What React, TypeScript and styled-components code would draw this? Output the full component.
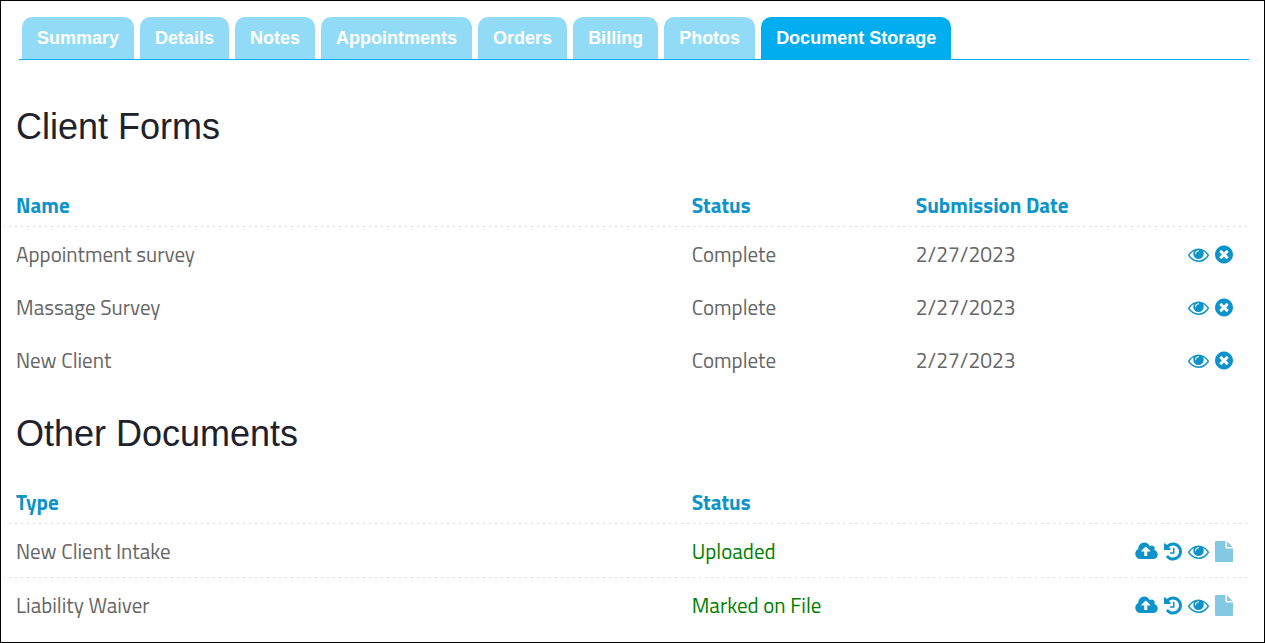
import React from "react";
import styled, { createGlobalStyle } from "styled-components";

const BLUE = "#0c94ca";

const GlobalStyle = createGlobalStyle`
  *, *::before, *::after { box-sizing: border-box; }
  body { margin: 0; background: #fff; font-family: "Liberation Sans", Arial, sans-serif; }
`;

const Page = styled.div`
  min-height: 100vh;
  border: 1px solid #000;
  padding: 16px 15px 0 3px;
`;

const TabBar = styled.nav`
  display: flex;
  gap: 6px;
  margin-left: 15px;
  padding-left: 3px;
  border-bottom: 1px solid #00aeef;
`;

const Tab = styled.a<{ $active?: boolean }>`
  padding: 0 15px;
  border-radius: 10px 10px 0 0;
  background: ${(p) => (p.$active ? "#00aeef" : "#92dbf6")};
  color: #fff;
  font-size: 18px;
  font-weight: 700;
  line-height: 42px;
  text-decoration: none;
  white-space: nowrap;
`;

const Section = styled.section<{ $first?: boolean }>`
  padding-top: ${(p) => (p.$first ? "45px" : "26px")};
`;

const Title = styled.h2<{ $first?: boolean }>`
  margin: 0 0 ${(p) => (p.$first ? "41px" : "31px")};
  padding-left: 12px;
  color: #20212b;
  font-size: 36px;
  font-weight: 400;
  line-height: 44px;
`;

const Table = styled.table`
  width: 100%;
  table-layout: fixed;
  border-collapse: separate;
  border-spacing: 0;
  font-family: "Titillium Web", Roboto, sans-serif;
  font-size: 21px;
  line-height: 24px;
`;

const Col = styled.col<{ $width?: string }>`
  width: ${(p) => p.$width ?? "auto"};
`;

/* A lined row draws short dashes, 2px on and 4px off, under its cells. */
const Row = styled.tr<{ $line?: boolean }>`
  ${(p) =>
    p.$line &&
    `
    background: linear-gradient(90deg, #dadada 1px, transparent 1px 5px, #dadada 5px) 0 100% / 6px 1px repeat-x;
    & > * { border-bottom: 1px solid transparent; }
  `}
`;

const HeadCell = styled.th`
  padding: 3px 12px 9px;
  color: ${BLUE};
  font-weight: 700;
  text-align: left;
`;

const EmptyCell = styled.td`
  padding: 0;
`;

const Cell = styled.td<{ $done?: boolean }>`
  padding: 15px 12px 14px;
  color: ${(p) => (p.$done ? "#008000" : "#666")};
  font-weight: 400;
`;

const Actions = styled.div`
  display: flex;
  justify-content: flex-end;
  align-items: center;
  gap: 6px;
  height: 24px;
  padding-right: 4px;
`;

const IconButton = styled.button<{ $faded?: boolean }>`
  display: flex;
  padding: 0;
  border: 0;
  background: none;
  color: ${BLUE};
  opacity: ${(p) => (p.$faded ? 0.5 : 1)};
  cursor: pointer;
`;

const icons = {
  eye: {
    label: "View",
    box: "0 0 1792 1792",
    width: 21,
    d: "M1664 960q-152-236-381-353 61 104 61 225 0 185-131.5 316.5t-316.5 131.5-316.5-131.5-131.5-316.5q0-121 61-225-229 117-381 353 133 205 333.5 326.5t434.5 121.5 434.5-121.5 333.5-326.5zm-720-384q0-20-14-34t-34-14q-125 0-214.5 89.5t-89.5 214.5q0 20 14 34t34 14 34-14 14-34q0-86 61-147t147-61q20 0 34-14t14-34zm848 384q0 34-20 69-140 230-376.5 368.5t-499.5 138.5-499.5-139-376.5-368q-20-35-20-69t20-69q140-229 376.5-368t499.5-139 499.5 139 376.5 368q20 35 20 69z",
  },
  remove: {
    label: "Remove",
    box: "128 0 1536 1792",
    width: 18,
    d: "M1277 1122q0-26-19-45l-181-181 181-181q19-19 19-45 0-27-19-46l-90-90q-19-19-46-19-26 0-45 19l-181 181-181-181q-19-19-45-19-27 0-46 19l-90 90q-19 19-19 46 0 26 19 45l181 181-181 181q-19 19-19 45 0 27 19 46l90 90q19 19 46 19 26 0 45-19l181-181 181 181q19 19 45 19 27 0 46-19l90-90q19-19 19-46zm387-226q0 209-103 385.5t-279.5 279.5-385.5 103-385.5-103-279.5-279.5-103-385.5 103-385.5 279.5-279.5 385.5-103 385.5 103 279.5 279.5 103 385.5z",
  },
  upload: {
    label: "Upload",
    box: "-64 0 1920 1792",
    width: 23,
    d: "M1216 864q0-14-9-23l-352-352q-9-9-23-9t-23 9l-351 351q-10 12-10 24 0 14 9 23t23 9h224v352q0 13 9.5 22.5t22.5 9.5h192q13 0 22.5-9.5t9.5-22.5v-352h224q13 0 22.5-9.5t9.5-22.5zm640 288q0 159-112.5 271.5t-271.5 112.5h-1088q-185 0-316.5-131.5t-131.5-316.5q0-130 70-240t188-165q-2-30-2-43 0-212 150-362t362-150q156 0 285.5 87t188.5 231q71-62 166-62 106 0 181 75t75 181q0 76-41 138 130 31 213.5 135.5t83.5 238.5z",
  },
  history: {
    label: "History",
    box: "128 0 1536 1792",
    width: 18,
    d: "M1664 896q0 156-61 298t-164 245-245 164-298 61q-172 0-327-72.5t-264-204.5q-7-10-6.5-22.5t8.5-20.5l137-138q10-9 25-9 16 2 23 12 73 95 179 147t225 52q104 0 198.5-40.5t163.5-109.5 109.5-163.5 40.5-198.5-40.5-198.5-109.5-163.5-163.5-109.5-198.5-40.5q-98 0-188 35.5t-160 101.5l137 138q31 30 14 69-17 40-59 40h-448q-26 0-45-19t-19-45v-448q0-42 40-59 39-17 69 14l130 129q107-101 244.5-156.5t284.5-55.5q156 0 298 61t245 164 164 245 61 298zm-640-288v448q0 14-9 23t-23 9h-320q-14 0-23-9t-9-23v-64q0-14 9-23t23-9h224v-352q0-14 9-23t23-9h64q14 0 23 9t9 23z",
  },
  file: {
    label: "Mark on file",
    box: "128 0 1536 1792",
    width: 18,
    d: "M1152 512v-472q22 14 36 28l408 408q14 14 28 36h-472zm-128 32q0 40 28 68t68 28h544v1056q0 40-28 68t-68 28h-1344q-40 0-68-28t-28-68v-1600q0-40 28-68t68-28h800v544z",
  },
};

type IconName = keyof typeof icons;

function Action({ name }: { name: IconName }) {
  const icon = icons[name];
  return (
    <IconButton type="button" aria-label={icon.label} $faded={name === "file"}>
      <svg width={icon.width} height={21} viewBox={icon.box} fill="currentColor" aria-hidden="true">
        <path d={icon.d} />
      </svg>
    </IconButton>
  );
}

const tabs = ["Summary", "Details", "Notes", "Appointments", "Orders", "Billing", "Photos", "Document Storage"];
const forms = ["Appointment survey", "Massage Survey", "New Client"];
const documents = [
  { type: "New Client Intake", status: "Uploaded" },
  { type: "Liability Waiver", status: "Marked on File" },
];
const formActions: IconName[] = ["eye", "remove"];
const documentActions: IconName[] = ["upload", "history", "eye", "file"];

function Columns() {
  return (
    <colgroup>
      <Col />
      <Col $width="18%" />
      <Col $width="16%" />
      <Col $width="146px" />
    </colgroup>
  );
}

export default function App() {
  return (
    <>
      <GlobalStyle />
      <Page>
        <TabBar aria-label="Client">
          {tabs.map((tab) => {
            const active = tab === "Document Storage";
            return (
              <Tab key={tab} href="#" $active={active} aria-current={active ? "page" : undefined}>
                {tab}
              </Tab>
            );
          })}
        </TabBar>
        <Section $first>
          <Title $first>Client Forms</Title>
          <Table>
            <Columns />
            <thead>
              <Row $line>
                <HeadCell scope="col">Name</HeadCell>
                <HeadCell scope="col">Status</HeadCell>
                <HeadCell scope="col">Submission Date</HeadCell>
                <EmptyCell />
              </Row>
            </thead>
            <tbody>
              {forms.map((form) => (
                <Row key={form}>
                  <Cell>{form}</Cell>
                  <Cell>Complete</Cell>
                  <Cell>2/27/2023</Cell>
                  <Cell>
                    <Actions>
                      {formActions.map((name) => <Action key={name} name={name} />)}
                    </Actions>
                  </Cell>
                </Row>
              ))}
            </tbody>
          </Table>
        </Section>
        <Section>
          <Title>Other Documents</Title>
          <Table>
            <Columns />
            <thead>
              <Row $line>
                <HeadCell scope="col">Type</HeadCell>
                <HeadCell scope="col">Status</HeadCell>
                <EmptyCell colSpan={2} />
              </Row>
            </thead>
            <tbody>
              {documents.map((doc, i) => (
                <Row key={doc.type} $line={i < documents.length - 1}>
                  <Cell>{doc.type}</Cell>
                  <Cell $done>{doc.status}</Cell>
                  <Cell colSpan={2}>
                    <Actions>
                      {documentActions.map((name) => <Action key={name} name={name} />)}
                    </Actions>
                  </Cell>
                </Row>
              ))}
            </tbody>
          </Table>
        </Section>
      </Page>
    </>
  );
}
